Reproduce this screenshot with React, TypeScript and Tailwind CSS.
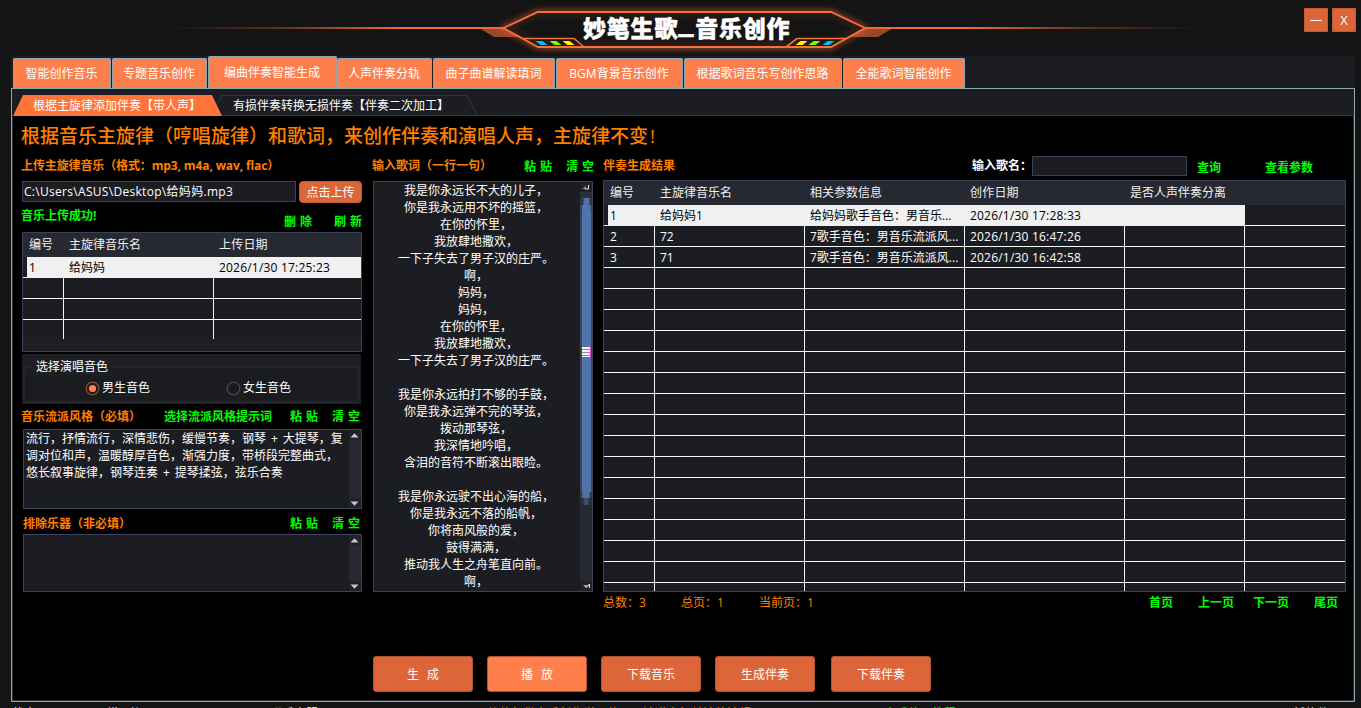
import React from 'react';

const mainTabs = [
  { label: '智能创作音乐', className: 'w-[98px] h-[30px] mr-px' },
  { label: '专题音乐创作', className: 'w-[95px] h-[30px] mr-px' },
  { label: '编曲伴奏智能生成', className: 'w-[129px] h-[32px]' },
  { label: '人声伴奏分轨', className: 'w-[95px] h-[30px] mr-px' },
  { label: '曲子曲谱解读填词', className: 'w-[122px] h-[30px] mr-px' },
  { label: 'BGM背景音乐创作', className: 'w-[127px] h-[30px] mr-px' },
  { label: '根据歌词音乐写创作思路', className: 'w-[158px] h-[30px] mr-px' },
  { label: '全能歌词智能创作', className: 'w-[122px] h-[30px]' },
];

const lyrics = [
  '我是你永远长不大的儿子，',
  '你是我永远用不坏的摇篮，',
  '在你的怀里，',
  '我放肆地撒欢，',
  '一下子失去了男子汉的庄严。',
  '啊，',
  '妈妈，',
  '妈妈，',
  '在你的怀里，',
  '我放肆地撒欢，',
  '一下子失去了男子汉的庄严。',
  '',
  '我是你永远拍打不够的手鼓，',
  '你是我永远弹不完的琴弦，',
  '拨动那琴弦，',
  '我深情地吟唱，',
  '含泪的音符不断滚出眼睑。',
  '',
  '我是你永远驶不出心海的船，',
  '你是我永远不落的船帆，',
  '你将南风般的爱，',
  '鼓得满满，',
  '推动我人生之舟笔直向前。',
  '啊，',
];

const uploadColumns = [
  { title: '编号', className: 'w-[41px] pl-1.5' },
  { title: '主旋律音乐名', className: 'w-[150px] pl-[5px]' },
  { title: '上传日期', className: 'w-[147px] pl-[5px] tracking-[0.200px]' },
];

const uploadRows = [['1', '给妈妈', '2026/1/30 17:25:23'], [], [], []];

const resultColumns = [
  { title: '编号', className: 'w-[51px] pl-1.5' },
  { title: '主旋律音乐名', className: 'w-[150px] pl-[5px]' },
  { title: '相关参数信息', className: 'w-[160px] pl-[5px]' },
  { title: '创作日期', className: 'w-[160px] pl-[5px] tracking-[0.200px]' },
  { title: '是否人声伴奏分离', className: 'w-[120px] pl-[5px]' },
  { title: '', className: 'w-[100px]' },
];

const resultRows: string[][] = [
  ['1', '给妈妈1', '给妈妈歌手音色：男音乐...', '2026/1/30 17:28:33'],
  ['2', '72', '7歌手音色：男音乐流派风...', '2026/1/30 16:47:26'],
  ['3', '71', '7歌手音色：男音乐流派风...', '2026/1/30 16:42:58'],
  ...Array.from({ length: 16 }, () => []),
];

const actions = [
  { label: '生\u00a0 成', className: 'bg-[#dc663a] [word-spacing:1px]' },
  { label: '播\u00a0 放', className: 'ml-3.5 bg-[#fe7f4c] [word-spacing:1px]' },
  { label: '下载音乐', className: 'ml-3.5 bg-[#dc663a]' },
  { label: '生成伴奏', className: 'ml-3.5 bg-[#dc663a]' },
  { label: '下载伴奏', className: 'ml-4 bg-[#dc663a]' },
];

const LinkText: React.FC<{ children: React.ReactNode; className?: string }> = ({ children, className = '' }) => (
  <button className={`font-bold text-[#00ff00] text-left shrink-0 whitespace-nowrap [word-spacing:1px] ${className}`}>{children}</button>
);

const Label: React.FC<{ children: React.ReactNode; className?: string }> = ({ children, className = '' }) => (
  <span className={`font-bold text-[#ff7f00] shrink-0 whitespace-nowrap ${className}`}>{children}</span>
);

const HeaderArt: React.FC = () => (
  <svg className="[grid-area:1/1]" width="1361" height="56" viewBox="0 0 1361 56" fill="none">
    <defs>
      <linearGradient id="fadeLeft" gradientUnits="userSpaceOnUse" x1="170" y1="0" x2="400" y2="0">
        <stop offset="0" stopColor="#f36a34" stopOpacity="0" />
        <stop offset="0.5" stopColor="#f36a34" stopOpacity="0.35" />
        <stop offset="1" stopColor="#f36a34" />
      </linearGradient>
      <linearGradient id="fadeRight" gradientUnits="userSpaceOnUse" x1="970" y1="0" x2="1200" y2="0">
        <stop offset="0" stopColor="#f36a34" />
        <stop offset="0.5" stopColor="#f36a34" stopOpacity="0.35" />
        <stop offset="1" stopColor="#f36a34" stopOpacity="0" />
      </linearGradient>
      <filter id="glow" x="-10%" y="-50%" width="120%" height="200%">
        <feGaussianBlur stdDeviation="3" />
      </filter>
    </defs>
    <path d="M479 28H504L520 37H494Z" fill="#98482c" />
    <path d="M893 28H865L850 37H878Z" fill="#98482c" />
    <rect x="170" y="27" width="334" height="2" fill="url(#fadeLeft)" />
    <rect x="865" y="27" width="335" height="2" fill="url(#fadeRight)" />
    <path d="M503.500 28L538 12H831L865 28L831 47H538Z" stroke="#ff6a30" strokeWidth="4" opacity="0.6" filter="url(#glow)" />
    <path d="M503.500 28L538 12H831L865 28L831 47H538Z" fill="#141414" stroke="#f9703a" strokeWidth="1.800" />
    <path d="M538 14H831L860 28L831 45H538L509 28Z" stroke="#ff6a30" strokeWidth="3" opacity="0.25" filter="url(#glow)" />
    <path d="M523 38.500H574L584 47M846 38.500H797L786 47" stroke="#f9703a" strokeWidth="1.600" />
    <path d="M535.500 41H542.500L547.500 45H540.500Z" fill="#00bfff" />
    <path d="M549.500 41H556.500L561.500 45H554.500Z" fill="#6eff0a" />
    <path d="M562.500 41H569.500L574.500 45H567.500Z" fill="#fff600" />
    <path d="M807.500 41H800.500L795.500 45H802.500Z" fill="#fff600" />
    <path d="M820.500 41H813.500L808.500 45H815.500Z" fill="#6eff0a" />
    <path d="M834.500 41H827.500L822.500 45H829.500Z" fill="#00bfff" />
  </svg>
);

const Header: React.FC = () => (
  <header className="grid h-14 shrink-0 w-[1361px]">
    <HeaderArt />
    <h1 className="[grid-area:1/1] flex pl-[583px] h-14 leading-[56px] text-[23px] tracking-[0.800px] font-black text-white whitespace-nowrap [-webkit-text-stroke:0.5px_white]">
      妙笔生歌
      <span className="inline-block w-[17px] text-center -translate-y-1 scale-x-130">_</span>
      音乐创作
    </h1>
    <div className="[grid-area:1/1] flex justify-end gap-1 pt-2 pr-[5px] text-white">
      <button className="size-6 bg-[#dc663a] border border-[#c05a33] flex items-center justify-center" aria-label="最小化">
        <span className="w-3 h-px bg-white" />
      </button>
      <button className="size-6 bg-[#dc663a] border border-[#c05a33] text-[13px] leading-[23px] text-center">X</button>
    </div>
  </header>
);

const SubTabs: React.FC = () => (
  <div className="flex h-[27px] pt-[6px] bg-[#1c1d22] border-b border-[#32384a] shrink-0">
    <button className="grid w-[209px] h-[21px] ml-px text-left text-white">
      <svg className="[grid-area:1/1] overflow-visible" width="209" height="21" viewBox="0 0 209 21">
        <path d="M0 21L10 0H199L209 21Z" fill="#ff7438" />
      </svg>
      <span className="[grid-area:1/1] pl-5 leading-[22px]">根据主旋律添加伴奏【带人声】</span>
    </button>
    <button className="grid w-[260px] h-5 text-left text-white">
      <svg className="[grid-area:1/1] overflow-visible" width="260" height="20" viewBox="0 0 260 20" fill="none">
        <path d="M-5 10L0 0.500H245L255 20" stroke="#32384a" />
      </svg>
      <span className="[grid-area:1/1] pl-[11px] leading-[22px]">有损伴奏转换无损伴奏【伴奏二次加工】</span>
    </button>
  </div>
);

interface GridProps {
  columns: { title: string; className: string }[];
  rows: string[][];
  selectedColumns: number;
}

const DataGrid: React.FC<GridProps> = ({ columns, rows, selectedColumns }) => (
  <div className="overflow-hidden">
    <div className="flex h-6 bg-[#272932] text-[#f0f0f0] leading-6">
      {columns.map((column, i) => (
        <div key={i} className={`shrink-0 whitespace-nowrap ${column.className}`}>{column.title}</div>
      ))}
    </div>
    {rows.map((row, r) => (
      <div key={r} className="flex h-[21px] leading-[21px] bg-[#1c1d22]">
        {columns.map((column, c) => {
          const selected = r === 0 && c < selectedColumns;
          const last = c === columns.length - 1;
          let look = 'border-[#f8f8f8] text-white';
          if (selected) look = 'bg-[#f0f0f0] text-black border-[#f0f0f0]';
          if (selected && c === 0) look = 'bg-[linear-gradient(90deg,#1c1d22_4px,#f0f0f0_4px)] text-black border-[#f0f0f0]';
          return (
            <div
              key={c}
              className={`shrink-0 border-b whitespace-nowrap overflow-hidden ${last ? '' : 'border-r'} ${look} ${column.className}`}
            >
              {row[c]}
            </div>
          );
        })}
      </div>
    ))}
  </div>
);

const ArrowUp: React.FC = () => (
  <svg className="-ml-px" width="9" height="5" viewBox="0 0 9 5"><path d="M0.500 4.500L4.500 0.200L8.500 4.500Z" fill="#c8c8c8" /></svg>
);

const ArrowDown: React.FC = () => (
  <svg className="-ml-px" width="9" height="5" viewBox="0 0 9 5"><path d="M0.500 0.500L4.500 4.800L8.500 0.500Z" fill="#c8c8c8" /></svg>
);

const ScrollTrack: React.FC = () => (
  <div className="w-3 shrink-0 flex flex-col">
    <div className="h-2.5 flex items-center justify-center bg-[#202227]"><ArrowUp /></div>
    <div className="flex-1 bg-[#272932]" />
    <div className="h-2.5 flex items-center justify-center bg-[#202227]"><ArrowDown /></div>
  </div>
);

const LyricsScrollbar: React.FC = () => (
  <div className="w-3 shrink-0 flex flex-col items-center bg-[#272932]">
    <div className="w-full h-2.5 flex items-center justify-center bg-[#202227]">
      <svg width="8" height="5" viewBox="0 0 8 5"><path d="M0 4L4 1V4Z" fill="#8a8a8a" /><path d="M3 4H6.500V0" stroke="#e8e8e8" fill="none" /></svg>
    </div>
    <div className="w-full h-1.5 bg-[#2c2f38]" />
    <div className="w-full h-[7px] bg-[linear-gradient(90deg,#2f3440_3px,#4f70a8_4px,#4f70a8_9px,#2f3440_10px)]" />
    <div className="w-full h-[7px] bg-[linear-gradient(90deg,#384254_2px,#5073aa_2px,#5073aa_10px,#3b455a_11px)]" />
    <div className="w-full flex-1 border-l-2 border-r border-[#3a465c] bg-[#5073aa] pt-[135px]">
      <div className="w-[9px] h-2.5 border-r border-[#f030e0] bg-[repeating-linear-gradient(180deg,#f4f4f4_0px,#f4f4f4_2px,#8a8a92_2px,#8a8a92_3px)]" />
    </div>
    <div className="w-full h-[6px] bg-[linear-gradient(90deg,#353d4d_2px,#5073aa_3px,#5073aa_9px,#353d4d_10px)]" />
    <div className="w-full h-[7px] bg-[linear-gradient(90deg,#2c2f38_3px,#3c5075_5px,#3c5075_8px,#2c2f38_9px)]" />
    <div className="w-full h-[76px]" />
    <div className="w-full h-2.5 pl-0.5 flex items-center justify-center bg-[#202227]">
      <svg width="8" height="6" viewBox="0 0 8 6"><path d="M0 2H5L3 5Z" fill="#a0a0a0" /><path d="M3.500 4.500L6.500 1V5" stroke="#e8e8e8" fill="none" /></svg>
    </div>
  </div>
);

const Radio: React.FC<{ label: string; checked?: boolean; className: string }> = ({ label, checked, className }) => (
  <label className={`flex items-center h-4 text-white ${className}`}>
    <svg className="mr-0.5 shrink-0" width="15" height="15" viewBox="0 0 15 15" fill="none">
      <circle cx="7.500" cy="7.500" r="6.300" fill="#1a1b1f" stroke={checked ? '#8a4a35' : '#454855'} strokeWidth="1.300" />
      {checked && <circle cx="7.500" cy="7.500" r="3.600" fill="#ff8050" />}
    </svg>
    {label}
  </label>
);

const UploadPanel: React.FC = () => (
  <section className="w-[340px] ml-[9px] shrink-0 flex flex-col">
    <div className="h-[25px] leading-[19px] -ml-px"><Label className="tracking-[-0.120px]">上传主旋律音乐（格式：mp3, m4a, wav, flac）</Label></div>
    <div className="flex justify-between h-[22px]">
      <div className="w-[274px] h-[21px] pl-px border border-[#3a4257] bg-[#1c1d22] text-white leading-5 whitespace-nowrap tracking-[0.300px]">
        C:\Users\ASUS\Desktop\给妈妈.mp3
      </div>
      <button className="w-[63px] h-[22px] rounded-sm bg-[#dc663a] border border-[#c05a33] text-white leading-[21px]">点击上传</button>
    </div>
    <div className="flex h-[29px] leading-[26px] -ml-px">
      <span className="font-bold text-[#00ff00]">音乐上传成功!</span>
      <LinkText className="ml-auto pt-1.5 h-[32px] w-7">删 除</LinkText>
      <LinkText className="ml-[22px] pt-1.5 h-[32px] w-7">刷 新</LinkText>
    </div>
    <div className="h-[120px] shrink-0 border border-[#3a4257] bg-[#1d1f24] overflow-hidden">
      <div className="h-[106px] overflow-hidden"><DataGrid columns={uploadColumns} rows={uploadRows} selectedColumns={3} /></div>
    </div>
    <div className="h-[50px] mt-0.5 w-[339px] shrink-0 bg-[#1d1f24] px-px pt-1">
      <fieldset className="h-[45px] rounded-sm border-2 border-[#24262e] bg-[#1b1c20]">
        <legend className="ml-1.5 px-[5px] h-[18px] leading-[18px] text-white bg-[#1d1f24]">选择演唱音色</legend>
        <div className="flex pt-1">
          <Radio label="男生音色" checked className="ml-[60px]" />
          <Radio label="女生音色" className="ml-[76px]" />
        </div>
      </fieldset>
    </div>
    <div className="h-[25px] leading-[26px] flex shrink-0 -ml-px">
      <Label className="w-[120px]">音乐流派风格（必填）</Label>
      <LinkText className="ml-[23px] w-[108px]">选择流派风格提示词</LinkText>
      <LinkText className="ml-[18px] w-7">粘 贴</LinkText>
      <LinkText className="ml-3.5 w-7">清 空</LinkText>
    </div>
    <div className="h-20 w-[339px] ml-px shrink-0 flex justify-between border border-[#3a4257] bg-[#1c1d22]">
      <div className="pl-0.5 text-white leading-[17px] whitespace-nowrap [word-spacing:1.800px]">
        <p>流行，抒情流行，深情悲伤，缓慢节奏，钢琴 + 大提琴，复</p>
        <p>调对位和声，温暖醇厚音色，渐强力度，带桥段完整曲式，</p>
        <p>悠长叙事旋律，钢琴连奏 + 提琴揉弦，弦乐合奏</p>
      </div>
      <ScrollTrack />
    </div>
    <div className="h-[25px] leading-[30px] flex shrink-0 ml-px">
      <Label>排除乐器（非必填）</Label>
      <LinkText className="ml-auto w-7">粘 贴</LinkText>
      <LinkText className="ml-3.5 mr-0.5 w-7">清 空</LinkText>
    </div>
    <div className="h-[58px] w-[339px] ml-px shrink-0 flex justify-end border border-[#3a4257] bg-[#1c1d22]">
      <ScrollTrack />
    </div>
  </section>
);

const LyricsPanel: React.FC = () => (
  <section className="w-[222px] ml-2.5 shrink-0">
    <div className="flex h-[25px] leading-[19px]">
      <Label>输入歌词（一行一句）</Label>
      <LinkText className="ml-auto w-7 h-5">粘 贴</LinkText>
      <LinkText className="ml-3.5 w-7 h-5">清 空</LinkText>
    </div>
    <div className="ml-px w-[220px] h-[411px] flex border border-[#3a4257] bg-[#1c1d22] overflow-hidden">
      <div className="w-[206px] pr-0.5 shrink-0 text-center text-white leading-[17px]">
        {lyrics.map((line, i) => (
          <p key={i} className="h-[17px]">{line}</p>
        ))}
      </div>
      <LyricsScrollbar />
    </div>
  </section>
);

const ResultPanel: React.FC = () => (
  <section className="w-[743px] ml-[9px] shrink-0">
    <div className="flex h-6 leading-5">
      <Label>伴奏生成结果</Label>
      <span className="ml-[297px] w-[60px] font-bold text-white">输入歌名：</span>
      <div className="w-[155px] h-5 border border-[#3a4257] bg-[#1c1d22]" />
      <LinkText className="ml-2.5 w-6 h-[22px] pt-px">查询</LinkText>
      <LinkText className="ml-11 w-12 h-[22px] pt-px">查看参数</LinkText>
    </div>
    <div className="h-[412px] border border-[#3a4257] bg-[#1c1d22] overflow-hidden">
      <DataGrid columns={resultColumns} rows={resultRows} selectedColumns={5} />
    </div>
  </section>
);

const App: React.FC = () => (
  <div
    lang="zh-CN"
    className="w-[1361px] h-[708px] overflow-hidden flex flex-col bg-[#141414] text-[12px] font-['Open_Sans','Noto_Sans_CJK_SC',sans-serif]"
  >
    <Header />
    <nav className="flex items-end h-8 w-[1344px] ml-[11px] pl-0.5 shrink-0 bg-[#1c1d22]">
      {mainTabs.map(tab => (
        <button
          key={tab.label}
          className={`shrink-0 border border-b-0 border-[#8ea6b2] rounded-t-[2px] bg-[#fc7f4c] text-white whitespace-nowrap pr-px ${tab.className}`}
        >
          {tab.label}
        </button>
      ))}
    </nav>

    <main className="w-[1344px] h-[614px] ml-[11px] shrink-0 flex flex-col border border-[#8ea6b2]">
      <SubTabs />
      <div className="flex-1 bg-black border border-t-0 border-[#2c3242]">
        <h2 className="h-10 leading-10 pl-2 text-[19px] font-medium text-[#ff7f00] whitespace-nowrap">
          根据音乐主旋律（哼唱旋律）和歌词，来创作伴奏和演唱人声，主旋律不变<span className="ml-0.5">!</span>
        </h2>
        <div className="flex h-[436px]">
          <UploadPanel />
          <LyricsPanel />
          <ResultPanel />
        </div>

        {/* Pagination */}
        <div className="flex h-[21px] leading-[22px] ml-[590px] text-[#ff7f00]">
          <span className="w-[78px]">总数：3</span>
          <span className="w-[78px]">总页：1</span>
          <span>当前页：1</span>
          <LinkText className="ml-auto w-[49px]">首页</LinkText>
          <LinkText className="w-[55px]">上一页</LinkText>
          <LinkText className="w-[61px]">下一页</LinkText>
          <LinkText className="w-[39px]">尾页</LinkText>
        </div>

        <div className="flex mt-[43px] ml-[360px]">
          {actions.map(action => (
            <button
              key={action.label}
              className={`w-[100px] h-9 pt-px shrink-0 rounded-[3px] border border-[#b0522f] text-white ${action.className}`}
            >
              {action.label}
            </button>
          ))}
        </div>
      </div>
    </main>

    {/* Status bar, mostly below the window edge */}
    <footer className="h-1.5 shrink-0 pt-[3px] overflow-hidden flex leading-[17px] text-white whitespace-nowrap">
      <span className="ml-3 w-[87px]">状态</span>
      <span className="w-[171px]">到期时间：</span>
      <span className="w-[217px]">联系客服：</span>
      <span className="w-[397px] text-[#ff7f00]">软件仅供音乐创作学习使用，请遵守相关法律法规</span>
      <span className="w-[397px] text-[#00ff00]">查看使用教程</span>
      <span>更新软件</span>
    </footer>
  </div>
);

export default App;
